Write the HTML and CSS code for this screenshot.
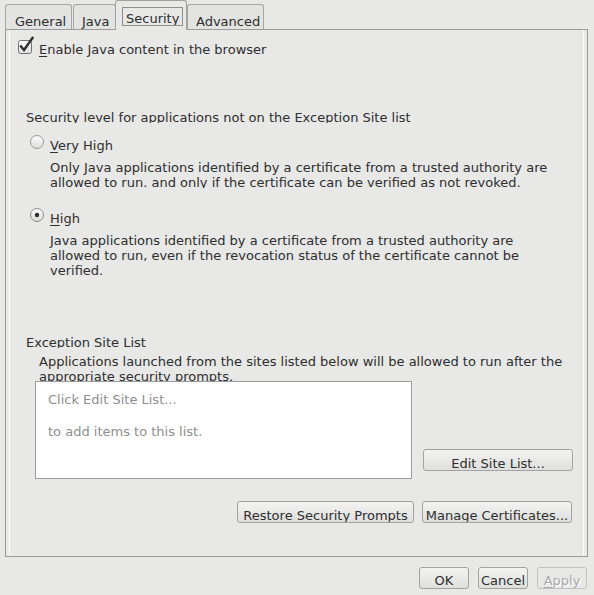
FILE: index.html
```html
<!DOCTYPE html>
<html>
<head>
<meta charset="utf-8">
<link rel="stylesheet" href="styles.css">
</head>
<body>
<div class="window">
  <div class="tabbar">
    <div class="tab tab-general">General</div>
    <div class="tab tab-java">Java</div>
    <div class="tab tab-security active"><span class="focus">Security</span></div>
    <div class="tab tab-advanced">Advanced</div>
  </div>
  <div class="panel">
    <div class="panel-inner">
      <div class="check-row">
        <svg class="checkbox" width="16" height="17" viewBox="0 0 16 17">
          <defs>
            <linearGradient id="cbg" x1="0" y1="0" x2="0" y2="1">
              <stop offset="0" stop-color="#ffffff"/>
              <stop offset="1" stop-color="#dcdcdc"/>
            </linearGradient>
          </defs>
          <rect x="0.5" y="3.5" width="13" height="13" rx="2" fill="url(#cbg)" stroke="#727272"/>
          <path d="M3 9.5 L6 13 L14.5 1" fill="none" stroke="#2e2e2e" stroke-width="2.4" stroke-linecap="square"/>
        </svg>
        <span class="label"><u>E</u>nable Java content in the browser</span>
      </div>

      <div class="section-label clip-one">Security level for applications not on the Exception Site list</div>

      <div class="radio-row first">
        <svg class="radio" width="14" height="14" viewBox="0 0 14 14">
          <defs>
            <linearGradient id="rbg" x1="0" y1="0" x2="0" y2="1">
              <stop offset="0" stop-color="#ffffff"/>
              <stop offset="1" stop-color="#dadada"/>
            </linearGradient>
          </defs>
          <circle cx="7" cy="7" r="6.5" fill="url(#rbg)" stroke="#9a9a9a"/>
        </svg>
        <span class="label"><u>V</u>ery High</span>
      </div>
      <div class="desc clip-two">Only Java applications identified by a certificate from a trusted authority are<br>allowed to run. and only if the certificate can be verified as not revoked.</div>

      <div class="radio-row second">
        <svg class="radio" width="14" height="14" viewBox="0 0 14 14">
          <circle cx="7" cy="7" r="6.5" fill="url(#rbg)" stroke="#8a8a8a"/>
          <circle cx="7" cy="7" r="2.2" fill="#2e2e2e"/>
        </svg>
        <span class="label"><u>H</u>igh</span>
      </div>
      <div class="desc">Java applications identified by a certificate from a trusted authority are<br>allowed to run, even if the revocation status of the certificate cannot be<br>verified.</div>

      <div class="section-label exception clip-one">Exception Site List</div>
      <div class="exception-desc">Applications launched from the sites listed below will be allowed to run after the<br>appropriate security prompts.</div>

      <div class="list-row">
        <div class="site-list">
          <div class="placeholder">Click Edit Site List...</div>
          <div class="placeholder second-line">to add items to this list.</div>
        </div>
        <button class="btn btn-edit">Edit <u>S</u>ite List...</button>
      </div>

      <div class="action-row">
        <button class="btn btn-restore"><u>R</u>estore Security Prompts</button>
        <button class="btn btn-manage"><u>M</u>anage Certificates...</button>
      </div>
    </div>
  </div>
  <div class="footer">
    <button class="btn btn-footer">OK</button>
    <button class="btn btn-footer">Cancel</button>
    <button class="btn btn-footer disabled"><u>A</u>pply</button>
  </div>
</div>
</body>
</html>
```

FILE: styles.css
```css
* {
  box-sizing: border-box;
}

html, body {
  margin: 0;
  padding: 0;
  background: #e8e8e7;
}

body {
  font-family: "DejaVu Sans", sans-serif;
  font-size: 13px;
  line-height: 15px;
  color: #2e2e2e;
  overflow: hidden;
}

.window {
  width: 594px;
  height: 595px;
  background: #e8e8e7;
}

u {
  text-decoration: underline;
  text-underline-offset: 2px;
  text-decoration-thickness: 1px;
}

/* Tabs */
.tabbar {
  display: flex;
  align-items: flex-end;
  height: 29px;
  padding-left: 5px;
}

.tab {
  height: 25px;
  border: 1px solid #a6a6a6;
  border-bottom: none;
  border-radius: 3px 3px 0 0;
  padding: 9px 0 0 9px;
  background: #e3e3e2;
  white-space: nowrap;
}

.tab-general {
  width: 67px;
}

.tab-java {
  width: 43px;
  margin-left: 1px;
  padding-left: 8px;
}

.tab-security {
  width: 72px;
  margin-left: -1px;
}

.tab-advanced {
  width: 77px;
  padding-left: 8px;
}

.tab.active {
  position: relative;
  z-index: 1;
  height: 30px;
  margin-bottom: -1px;
  padding: 6px 0 0 6px;
  background: #e8e8e7;
  border-color: #a0a0a0;
}

.focus {
  display: inline-block;
  height: 19px;
  padding: 3px 3px 0 3px;
  border: 1px solid #8e8e8e;
  overflow: hidden;
  line-height: 15px;
}

/* Panel */
.panel {
  height: 528px;
  margin: 0 6px 0 5px;
  border: 1px solid #9a9a9a;
  padding: 0 3px;
}

.panel-inner {
  height: 100%;
  border-left: 1px solid #fcfcfc;
  border-right: 1px solid #fcfcfc;
  padding-top: 12px;
}

.check-row {
  display: flex;
  align-items: flex-start;
  margin-left: 8px;
  height: 15px;
}

.checkbox {
  margin-top: -5px;
  margin-right: 5px;
  flex: none;
  overflow: visible;
}

.section-label {
  margin-top: 53px;
  margin-left: 16px;
  white-space: nowrap;
}

.clip-one {
  height: 13px;
  overflow: hidden;
}

.radio-row {
  display: flex;
  align-items: flex-start;
  height: 15px;
  margin-left: 20px;
}

.radio-row.first {
  margin-top: 15px;
}

.radio-row.second {
  margin-top: 23px;
}

.radio {
  flex: none;
  margin-top: -3px;
  margin-right: 6px;
}

.desc {
  margin-top: 7px;
  margin-left: 40px;
  white-space: nowrap;
}

.clip-two {
  height: 28px;
  overflow: hidden;
}

.section-label.exception {
  margin-top: 57px;
}

.exception-desc {
  margin-top: 6px;
  margin-left: 29px;
  height: 27px;
  overflow: hidden;
  white-space: nowrap;
}

.list-row {
  display: flex;
  align-items: flex-end;
}

.site-list {
  width: 377px;
  height: 98px;
  margin-left: 25px;
  background: #ffffff;
  border: 1px solid #9c9c9c;
  padding: 10px 0 0 12px;
}

.placeholder {
  color: #8e8e8e;
}

.placeholder.second-line {
  margin-top: 17px;
}

/* Buttons */
.btn {
  font-family: "DejaVu Sans", sans-serif;
  font-size: 13px;
  line-height: 15px;
  color: #2e2e2e;
  height: 22px;
  padding: 6px 0 0 0;
  border: 1px solid #a2a2a2;
  border-radius: 3px;
  background: linear-gradient(#f3f3f2, #dfdfde);
  text-align: center;
  white-space: nowrap;
  overflow: hidden;
  vertical-align: top;
}

.btn-edit {
  width: 150px;
  margin-left: 11px;
  margin-bottom: 8px;
}

.action-row {
  display: flex;
  justify-content: flex-end;
  gap: 8px;
  margin-top: 22px;
  padding-right: 11px;
}

.btn-restore {
  width: 177px;
}

.btn-manage {
  width: 150px;
}

.footer {
  display: flex;
  justify-content: flex-end;
  gap: 9px;
  padding-top: 10px;
  padding-right: 7px;
}

.btn-footer {
  width: 50px;
  padding: 4px 0 0 0;
}

.btn.disabled {
  color: #a8a8a8;
  background: #e8e8e7;
  border-color: #c2c2c2;
  text-shadow: 1px 1px 0 #ffffff;
}
```
